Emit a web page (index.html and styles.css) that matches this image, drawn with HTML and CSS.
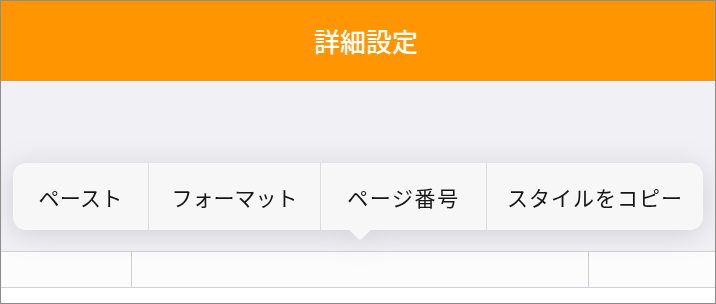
FILE: index.html
```html
<!DOCTYPE html>
<html lang="ja">
<head>
<meta charset="utf-8">
<title>詳細設定</title>
<link rel="stylesheet" href="styles.css">
</head>
<body>
<div class="screen">
  <div class="nav"><h1>詳細設定</h1></div>
  <div class="stage">
    <div class="menu">
      <div class="menu-item paste">ペースト</div>
      <div class="menu-item format">フォーマット</div>
      <div class="menu-item page">ページ番号</div>
      <div class="menu-item copy">スタイルをコピー</div>
      <span class="menu-tail"></span>
    </div>
  </div>
  <div class="row">
    <div class="cell c1"></div>
    <div class="cell c2"></div>
    <div class="cell c3"></div>
  </div>
  <div class="bottom"></div>
</div>
</body>
</html>
```

FILE: styles.css
```css
*{margin:0;padding:0;box-sizing:border-box;}
body{background:#fff;font-family:"Noto Sans CJK JP","Noto Sans",sans-serif;}
.screen{width:716px;height:304px;border:1px solid #8c8c8c;display:flex;flex-direction:column;background:#fff;overflow:hidden;}

.nav{height:80px;background:#ff9500;border-bottom:1px solid #dc9a4c;display:flex;align-items:center;justify-content:center;flex:none;padding-left:16px;}
.nav h1{color:#fff;font-size:26px;font-weight:500;line-height:1;padding-top:1px;}

.stage{height:170px;background:#f0f0f5;padding:82px 0 0 12px;flex:none;position:relative;z-index:2;}
.menu{position:relative;display:flex;width:690px;height:67px;background:#f7f7f7;border-radius:13px;filter:drop-shadow(0 4px 14px rgba(0,0,0,0.13));}
.menu-item{display:flex;align-items:center;justify-content:center;font-size:21px;color:#161616;letter-spacing:0.3px;position:relative;z-index:1;}
.menu-item+.menu-item{border-left:1px solid #dcdcdc;}
.paste{width:135px;}
.format{width:172px;letter-spacing:0;}
.page{width:166px;letter-spacing:1.6px;}
.copy{width:217px;letter-spacing:1px;}
.menu-tail{position:absolute;left:338px;top:56px;width:18px;height:18px;background:#f7f7f7;transform:rotate(45deg);border-bottom-right-radius:3px;}

.row{height:37px;display:flex;border-top:1px solid #cfd3d8;border-bottom:1px solid #cfd3d8;background:#fcfcfc;flex:none;}
.cell{height:100%;}
.c1{width:131px;border-right:1px solid #cbcfd4;}
.c2{width:457px;border-right:1px solid #cbcfd4;}
.c3{flex:1;}
.bottom{flex:1;background:#fff;}
```
